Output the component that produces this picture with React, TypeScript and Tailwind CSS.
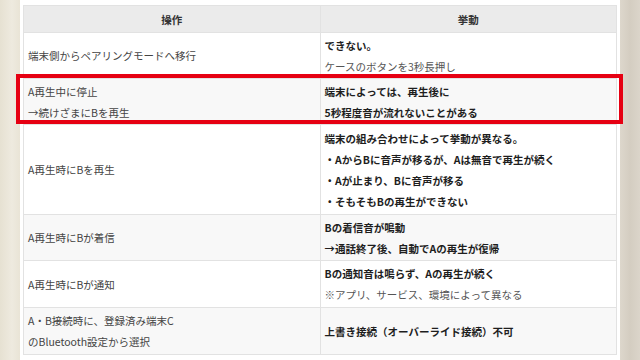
const rows: {
  op: string[];
  act: { text: string; bold: boolean }[];
  h: string;
  alt: boolean;
}[] = [
  {
    op: ["端末側からペアリングモードへ移行"],
    act: [
      { text: "できない。", bold: true },
      { text: "ケースのボタンを3秒長押し", bold: false },
    ],
    h: "h-[46px]",
    alt: false,
  },
  {
    op: ["A再生中に停止", "→続けざまにBを再生"],
    act: [
      { text: "端末によっては、再生後に", bold: true },
      { text: "5秒程度音が流れないことがある", bold: true },
    ],
    h: "h-[46px]",
    alt: true,
  },
  {
    op: ["A再生時にBを再生"],
    act: [
      { text: "端末の組み合わせによって挙動が異なる。", bold: true },
      { text: "・AからBに音声が移るが、Aは無音で再生が続く", bold: true },
      { text: "・Aが止まり、Bに音声が移る", bold: true },
      { text: "・そもそもBの再生ができない", bold: true },
    ],
    h: "h-[90px]",
    alt: false,
  },
  {
    op: ["A再生時にBが着信"],
    act: [
      { text: "Bの着信音が鳴動", bold: true },
      { text: "→通話終了後、自動でAの再生が復帰", bold: true },
    ],
    h: "h-[46px]",
    alt: true,
  },
  {
    op: ["A再生時にBが通知"],
    act: [
      { text: "Bの通知音は鳴らず、Aの再生が続く", bold: true },
      { text: "※アプリ、サービス、環境によって異なる", bold: false },
    ],
    h: "h-[47px]",
    alt: false,
  },
  {
    op: ["A・B接続時に、登録済み端末C", "のBluetooth設定から選択"],
    act: [{ text: "上書き接続（オーバーライド接続）不可", bold: true }],
    h: "h-[47px]",
    alt: true,
  },
];

export default function App() {
  return (
    <div className="relative flex h-[360px] w-[640px] overflow-hidden font-['Noto_Sans_CJK_JP',sans-serif] text-[10.5px] leading-[21px]">
      {/* paper texture edges */}
      <div className="w-[20px] bg-[linear-gradient(90deg,#e6e1d2,#eeeadf_60%,#e9e4d6)]" />
      <div className="w-[600px] bg-white px-[3px] pt-[5px]">
        <table className="w-full table-fixed border-collapse">
          <thead>
            <tr className="h-[27px] bg-[#ebebeb]">
              <th className="border border-[#e2e2e2] text-center font-bold text-[#333]">
                操作
              </th>
              <th className="border border-[#e2e2e2] text-center font-bold text-[#333]">
                挙動
              </th>
            </tr>
          </thead>
          <tbody>
            {rows.map((r, i) => (
              <tr key={i} className={`${r.h} ${r.alt ? "bg-[#f8f8f8]" : "bg-white"}`}>
                <td className="border border-[#e2e2e2] px-[4px] align-middle text-[#444]">
                  {r.op.map((l) => (
                    <div key={l}>{l}</div>
                  ))}
                </td>
                <td className="border border-[#e2e2e2] px-[4px] align-middle">
                  {r.act.map((a) => (
                    <div
                      key={a.text}
                      className={a.bold ? "font-bold text-[#1e1e1e]" : "text-[#555]"}
                    >
                      {a.text}
                    </div>
                  ))}
                </td>
              </tr>
            ))}
          </tbody>
        </table>
      </div>
      <div className="w-[20px] bg-[linear-gradient(90deg,#ddd7cc,#d4cdc1_50%,#dbd5ca)]" />

      {/* highlight box */}
      <div className="absolute left-[16px] top-[74px] h-[50px] w-[607px] border-4 border-[#e60012]" />
    </div>
  );
}
